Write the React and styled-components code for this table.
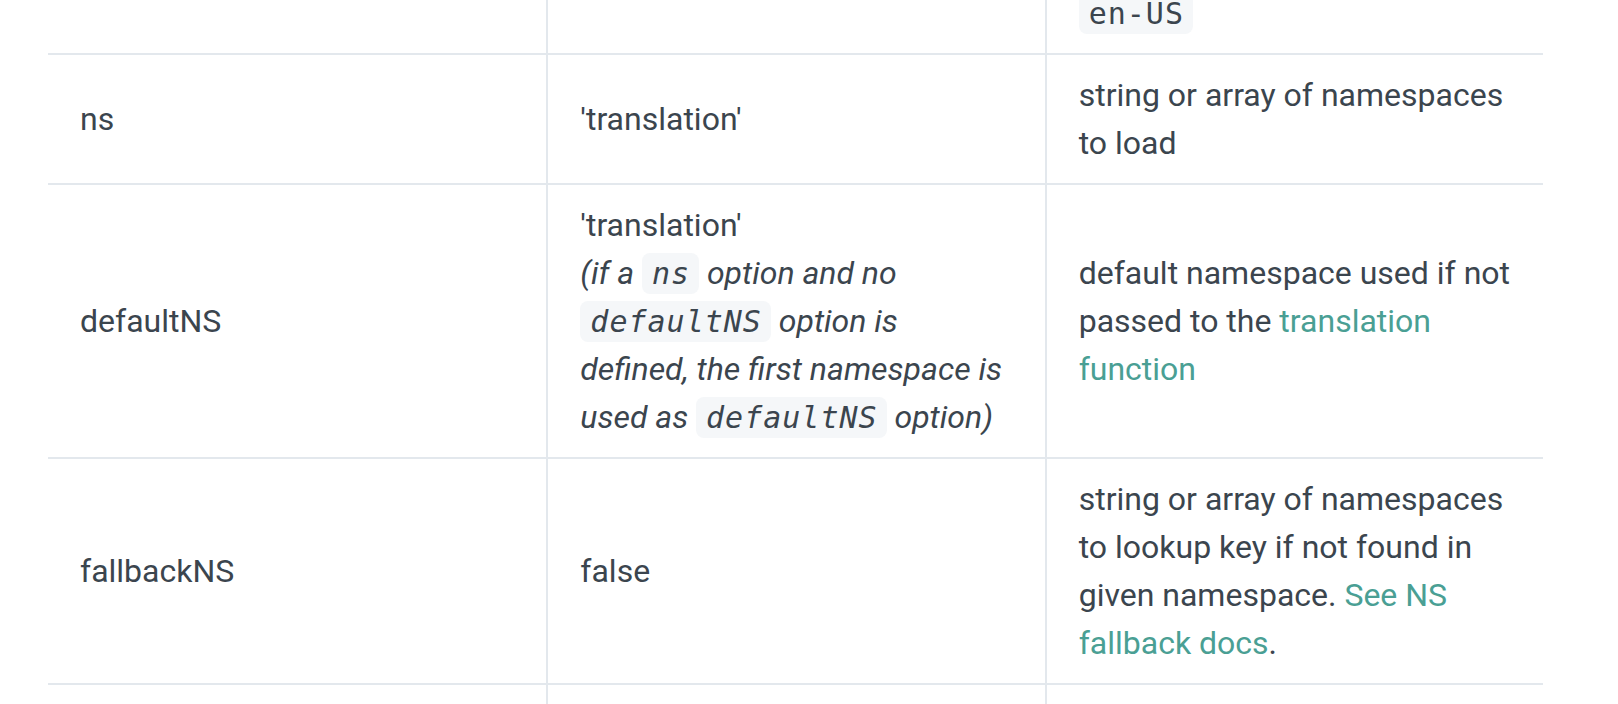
import React from "react";
import styled, { createGlobalStyle } from "styled-components";

const GlobalStyle = createGlobalStyle`
  html, body {
    margin: 0;
    padding: 0;
    background: #ffffff;
    overflow: hidden;
  }
  body {
    font-family: Roboto, "Noto Sans", sans-serif;
    color: #3b454e;
  }
`;

const Page = styled.div`
  padding: 0 75px 0 48px;
  height: 704px;
  overflow: hidden;
`;

// scrolled view: only the bottom of the first row is visible
const Scroller = styled.div`
  margin-top: ${(p) => p.offset}px;
`;

const Table = styled.table`
  width: 1495px;
  table-layout: fixed;
  border-collapse: separate;
  border-spacing: 0;
  font-size: 32px;
  line-height: 48px;
`;

const Cell = styled.td`
  padding: 16px 32px;
  vertical-align: middle;
  border-bottom: 2px solid #e3e8ed;
  & + & {
    border-left: 2px solid #e3e8ed;
  }
`;

const Em = styled.em`
  font-style: italic;
`;

const Code = styled.code`
  font-family: "DejaVu Sans Mono", "Liberation Mono", monospace;
  font-size: 30px;
  line-height: 30px;
  letter-spacing: 1px;
  background: #f5f7f9;
  border-radius: 8px;
  padding: 3px 9px 3px 10px;
  color: #3b454e;
`;

const Link = styled.a`
  color: #4a9f94;
  text-decoration: none;
`;

const rows = [
  {
    name: "cleanCode",
    value: "false",
    desc: (
      <>
        main language will be lowercased; e.g. <Code>EN</Code> --&gt;{" "}
        <Code>en</Code>, while leaving full locales like <Code>en-US</Code>
      </>
    ),
  },
  {
    name: "ns",
    value: "'translation'",
    desc: "string or array of namespaces to load",
  },
  {
    name: "defaultNS",
    value: (
      <>
        'translation'
        <br />
        <Em>
          (if a <Code>ns</Code> option and no <Code>defaultNS</Code> option is
          defined, the first namespace is used as <Code>defaultNS</Code>{" "}
          option)
        </Em>
      </>
    ),
    desc: (
      <>
        default namespace used if not passed to the{" "}
        <Link href="#">translation function</Link>
      </>
    ),
  },
  {
    name: "fallbackNS",
    value: "false",
    desc: (
      <>
        string or array of namespaces to lookup key if not found in given
        namespace. <Link href="#">See NS fallback docs</Link>.
      </>
    ),
  },
  {
    name: "fallbackLng",
    value: "'dev'",
    desc: "language to use if translations in user language are not available",
  },
];

export default function App() {
  return (
    <>
      <GlobalStyle />
      <Page>
        <Scroller offset={-171}>
          <Table>
            <tbody>
              {rows.map((row) => (
                <tr key={row.name}>
                  <Cell>{row.name}</Cell>
                  <Cell>{row.value}</Cell>
                  <Cell>{row.desc}</Cell>
                </tr>
              ))}
            </tbody>
          </Table>
        </Scroller>
      </Page>
    </>
  );
}
